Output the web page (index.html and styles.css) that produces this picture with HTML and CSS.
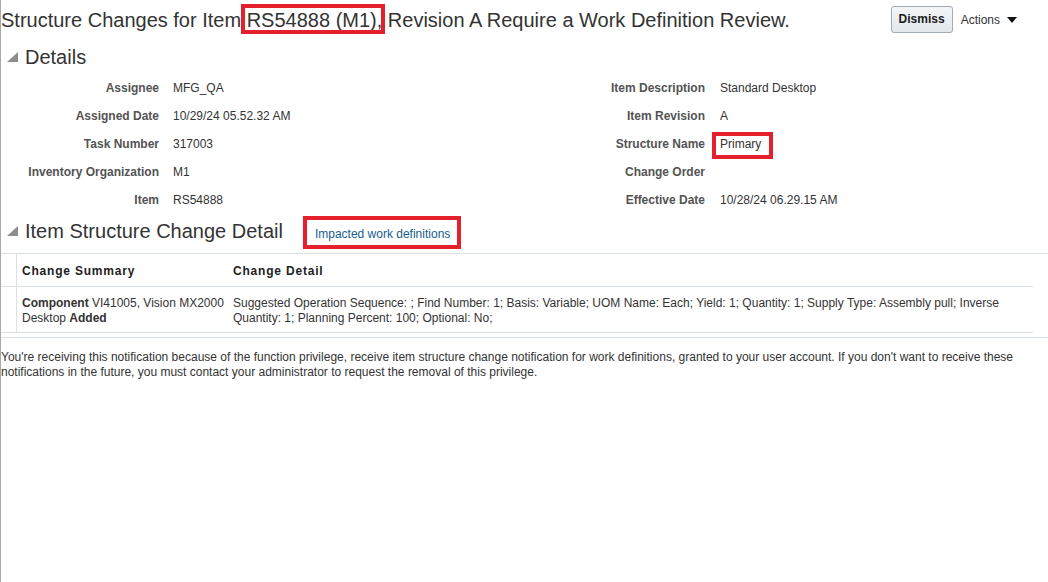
FILE: index.html
```html
<!DOCTYPE html>
<html lang="en">
<head>
<meta charset="utf-8">
<title>Structure Changes Notification</title>
<link rel="stylesheet" href="styles.css">
</head>
<body>
<div class="page">
  <div class="topbar">
    <h1 class="title">Structure Changes for Item <span class="hl hl-title">RS54888 (M1),</span> Revision A Require a Work Definition Review.</h1>
    <div class="toolbar">
      <button class="btn" type="button">Dismiss</button>
      <span class="menu">Actions<svg class="menu-caret" width="10" height="6" viewBox="0 0 10 6"><path d="M0 0H10L5 6Z" fill="#111"/></svg></span>
    </div>
  </div>

  <h2 class="section-title"><svg class="disclose" width="11" height="10" viewBox="0 0 11 10"><path d="M11 0V10H0Z" fill="#8d8d8d"/></svg>Details</h2>

  <div class="form">
    <div class="lbl">Assignee</div><div class="val val-l">MFG_QA</div>
    <div class="lbl">Item Description</div><div class="val val-r">Standard Desktop</div>

    <div class="lbl">Assigned Date</div><div class="val val-l">10/29/24 05.52.32 AM</div>
    <div class="lbl">Item Revision</div><div class="val val-r">A</div>

    <div class="lbl">Task Number</div><div class="val val-l">317003</div>
    <div class="lbl">Structure Name</div><div class="val val-r"><span class="hl hl-primary">Primary</span></div>

    <div class="lbl">Inventory Organization</div><div class="val val-l">M1</div>
    <div class="lbl">Change Order</div><div class="val val-r"></div>

    <div class="lbl">Item</div><div class="val val-l">RS54888</div>
    <div class="lbl">Effective Date</div><div class="val val-r">10/28/24 06.29.15 AM</div>
  </div>

  <div class="section-head">
    <h2 class="section-title"><svg class="disclose" width="11" height="10" viewBox="0 0 11 10"><path d="M11 0V10H0Z" fill="#8d8d8d"/></svg>Item Structure Change Detail</h2>
    <a class="link hl hl-link" href="#">Impacted work definitions</a>
  </div>

  <div class="table-wrap">
    <table class="grid">
      <colgroup>
        <col class="c-rh">
        <col class="c-sum">
        <col>
      </colgroup>
      <thead>
        <tr>
          <th class="rh"></th>
          <th>Change Summary</th>
          <th>Change Detail</th>
        </tr>
      </thead>
      <tbody>
        <tr>
          <td class="rh"></td>
          <td><span class="summary"><b>Component</b> VI41005, Vision MX2000 Desktop <b>Added</b></span></td>
          <td>Suggested Operation Sequence: ; Find Number: 1; Basis: Variable; UOM Name: Each; Yield: 1; Quantity: 1; Supply Type: Assembly pull; Inverse Quantity: 1; Planning Percent: 100; Optional: No;</td>
        </tr>
      </tbody>
    </table>
  </div>

  <p class="footer">You're receiving this notification because of the function privilege, receive item structure change notification for work definitions, granted to your user account. If you don't want to receive these notifications in the future, you must contact your administrator to request the removal of this privilege.</p>
</div>
</body>
</html>
```

FILE: styles.css
```css
html, body {
  margin: 0;
  padding: 0;
  background: #fff;
}

body {
  font-family: "Liberation Sans", Arial, sans-serif;
  font-size: 12px;
  color: #333;
}

.page {
  border-left: 1px solid #a9a9a9;
  min-height: 100vh;
  box-sizing: border-box;
}

/* ---------- top bar ---------- */
.topbar {
  display: flex;
  justify-content: space-between;
  align-items: flex-start;
  height: 46px;
  padding-right: 31px;
}

.title {
  margin: 0;
  padding-top: 9px;
  font-size: 20px;
  font-weight: normal;
  line-height: 23px;
  color: #333;
  white-space: nowrap;
}

.toolbar {
  display: flex;
  align-items: center;
  gap: 8px;
  margin-top: 6px;
}

.btn {
  height: 27px;
  padding: 0 7px;
  font-family: "Liberation Sans", Arial, sans-serif;
  font-size: 12px;
  font-weight: bold;
  line-height: 25px;
  color: #1a1a1a;
  border: 1px solid #a2aab2;
  border-radius: 3px;
  background: linear-gradient(#f3f6f8, #e1e7ec);
}

.menu {
  display: flex;
  align-items: center;
  color: #333;
  font-size: 12px;
}

.menu-caret {
  margin-left: 7px;
}

/* ---------- annotation boxes ---------- */
.hl {
  position: relative;
}

.hl::after {
  content: "";
  position: absolute;
  border: 4px solid #e3202b;
  pointer-events: none;
}

.hl-title::after {
  top: -5px;
  bottom: -3px;
  left: -6px;
  right: -3px;
}

.hl-primary::after {
  top: -5px;
  bottom: -8px;
  left: -8px;
  right: -12px;
}

.hl-link::after {
  top: -11px;
  bottom: -8px;
  left: -12px;
  right: -11px;
}

/* ---------- section headers ---------- */
.section-title {
  margin: 0;
  font-size: 20px;
  font-weight: normal;
  line-height: 23px;
  color: #333;
  white-space: nowrap;
}

.disclose {
  margin-left: 6px;
  margin-right: 7px;
  vertical-align: 2px;
}

.section-head {
  display: flex;
  align-items: baseline;
  margin-top: 6px;
}

.link {
  margin-left: 32px;
  font-size: 12px;
  color: #155d8f;
  text-decoration: none;
}

/* ---------- form ---------- */
.form {
  display: grid;
  grid-template-columns: 158px 388px 158px 1fr;
  grid-auto-rows: 28px;
  margin-top: 5px;
  line-height: 28px;
}

.lbl {
  text-align: right;
  font-weight: bold;
  color: #535353;
  white-space: nowrap;
}

.val {
  color: #333;
  white-space: nowrap;
}

.val-l {
  padding-left: 14px;
}

.val-r {
  padding-left: 15px;
}

/* ---------- table ---------- */
.table-wrap {
  margin-top: 10px;
  border-top: 1px solid #d9e0e6;
  border-bottom: 1px solid #d9e0e6;
  padding-bottom: 4px;
}

.grid {
  width: 1032px;
  table-layout: fixed;
  border-collapse: separate;
  border-spacing: 0;
  font-size: 12px;
  line-height: 15px;
}

.c-rh {
  width: 16px;
}

.c-sum {
  width: 211px;
}

.grid th,
.grid td {
  border-bottom: 1px solid #d9e0e6;
  text-align: left;
  vertical-align: top;
}

.grid th {
  padding: 10px 5px 7px 5px;
  font-weight: bold;
  color: #222;
  letter-spacing: 0.8px;
}

.grid td {
  padding: 9px 5px 6px 5px;
  color: #333;
}

.grid td:nth-child(2),
.grid th:nth-child(2) {
  padding-right: 2px;
}

.grid .rh {
  padding: 0;
  border-right: 1px solid #d9e0e6;
}

/* ---------- footer ---------- */
.footer {
  margin: 0;
  padding-top: 12px;
  font-size: 12px;
  line-height: 15px;
  color: #333;
}
```
